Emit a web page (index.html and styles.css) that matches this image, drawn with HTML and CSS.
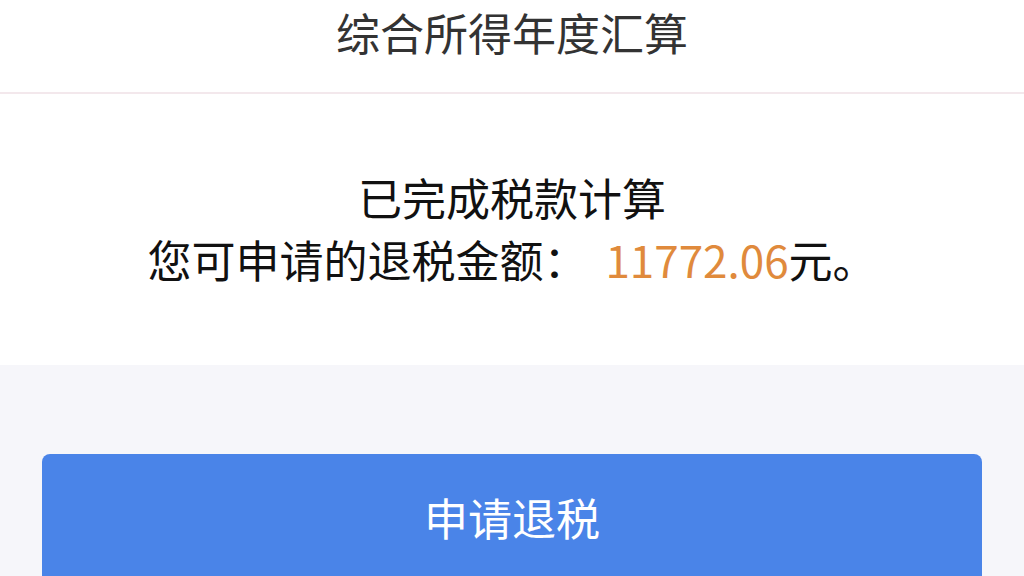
FILE: index.html
```html
<!DOCTYPE html>
<html lang="zh">
<head>
<meta charset="utf-8">
<link rel="stylesheet" href="styles.css">
</head>
<body>
<div class="page">
  <header class="header">
    <h1 class="title">综合所得年度汇算</h1>
  </header>
  <section class="result">
    <p class="line">已完成税款计算</p>
    <p class="line">您可申请的退税金额：<span class="amount">11772.06</span>元。</p>
  </section>
  <section class="actions">
    <button class="btn">申请退税</button>
  </section>
</div>
</body>
</html>
```
FILE: styles.css
```css
* { box-sizing: border-box; margin: 0; padding: 0; }
html, body { width: 1024px; height: 576px; overflow: hidden; }
body {
  font-family: "Noto Sans CJK SC", "Noto Sans", sans-serif;
  background: #f6f6fa;
}
.page { display: flex; flex-direction: column; height: 576px; }
.page > * { flex-shrink: 0; }
.header {
  height: 94px;
  background: #fff;
  border-bottom: 2px solid #f3e8ec;
  display: flex;
  justify-content: center;
}
.title {
  font-size: 44px;
  font-weight: 400;
  color: #333;
  line-height: 64px;
}
.result {
  background: #fff;
  height: 271px;
  display: flex;
  flex-direction: column;
  align-items: center;
  padding-top: 72px;
}
.line {
  font-size: 44px;
  line-height: 62px;
  color: #111;
}
.amount {
  color: #e08a3c;
  margin-left: 18px;
}
.actions {
  padding: 89px 42px 0 42px;
}
.btn {
  width: 100%;
  height: 140px;
  border: none;
  border-radius: 8px;
  background: #4a84e8;
  color: #fff;
  font-family: inherit;
  font-size: 44px;
  display: flex;
  justify-content: center;
  padding-top: 33px;
  line-height: 60px;
}
```
